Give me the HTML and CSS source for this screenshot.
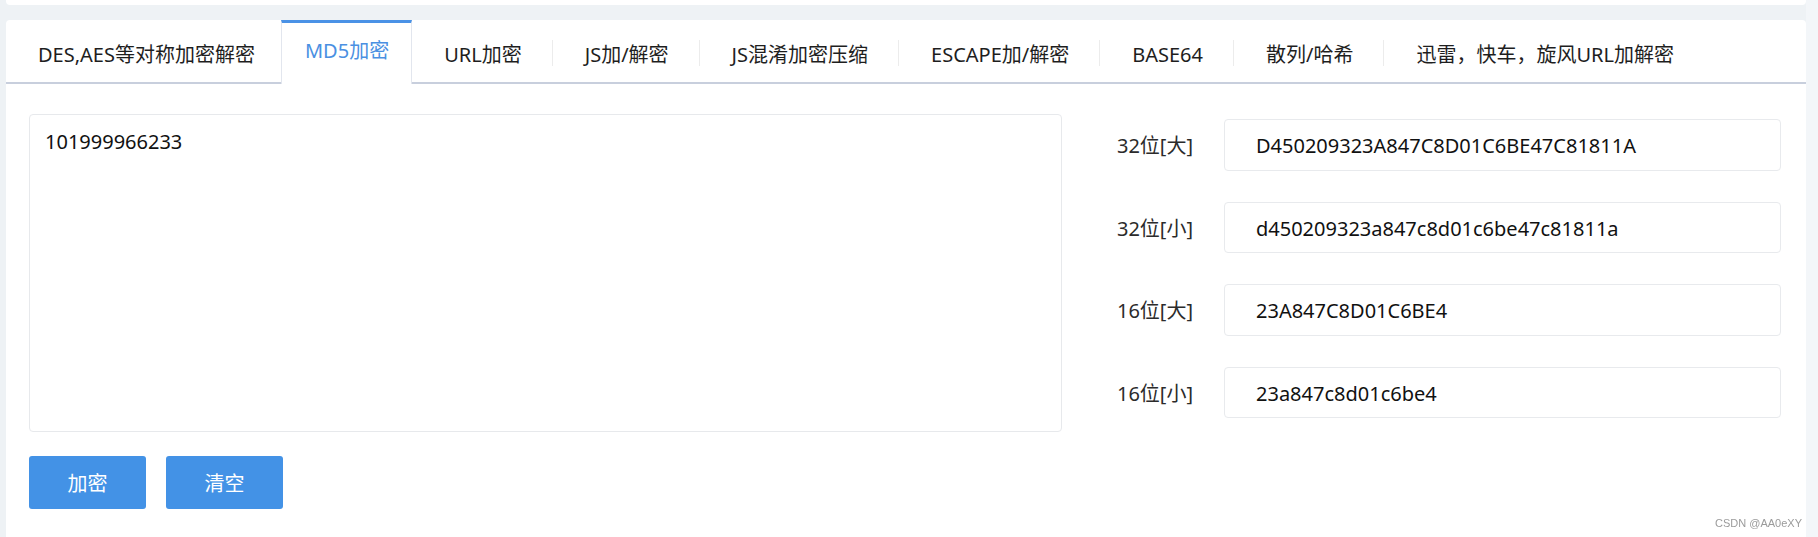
FILE: index.html
```html
<!DOCTYPE html>
<html lang="zh-CN">
<head>
<meta charset="utf-8">
<title>MD5加密</title>
<link rel="stylesheet" href="styles.css">
</head>
<body>
<div class="page">
  <div class="topbar"></div>
  <div class="card">
    <nav class="tabs">
      <div class="tab first">DES,AES等对称加密解密</div>
      <div class="tab active">MD5加密</div>
      <div class="tab sep">URL加密</div>
      <div class="tab sep">JS加/解密</div>
      <div class="tab sep">JS混淆加密压缩</div>
      <div class="tab sep">ESCAPE加/解密</div>
      <div class="tab sep">BASE64</div>
      <div class="tab sep">散列/哈希</div>
      <div class="tab">迅雷，快车，旋风URL加解密</div>
    </nav>
    <div class="content">
      <div class="left">
        <textarea class="source">101999966233</textarea>
        <div class="actions">
          <button class="btn">加密</button>
          <button class="btn">清空</button>
        </div>
      </div>
      <div class="right">
        <div class="row"><span class="label">32位[大]</span><div class="field">D450209323A847C8D01C6BE47C81811A</div></div>
        <div class="row"><span class="label">32位[小]</span><div class="field">d450209323a847c8d01c6be47c81811a</div></div>
        <div class="row"><span class="label">16位[大]</span><div class="field">23A847C8D01C6BE4</div></div>
        <div class="row"><span class="label">16位[小]</span><div class="field">23a847c8d01c6be4</div></div>
      </div>
    </div>
  </div>
</div>
<div class="watermark">CSDN @AA0eXY</div>
</body>
</html>
```

FILE: styles.css
```css
html, body {
  margin: 0;
  padding: 0;
  height: 100%;
  overflow: hidden;
}
body {
  background: linear-gradient(to right, #eef2f5 calc(100% - 12px), #f3f6f9 calc(100% - 12px));
  font-family: "Noto Sans", "Noto Sans CJK SC", sans-serif;
  color: #222;
}
.page {
  padding: 0 12px 0 6px;
}
.topbar {
  height: 5px;
  background: #fff;
  border-radius: 0 0 4px 4px;
}
.card {
  margin-top: 15px;
  background: #fff;
  border-radius: 4px 4px 0 0;
  height: calc(100vh - 20px);
}
.tabs {
  display: flex;
  height: 62px;
  border-bottom: 2px solid #c8cfdd;
}
.tab {
  position: relative;
  display: flex;
  align-items: center;
  box-sizing: border-box;
  height: 62px;
  padding: 8px 31px 0 32px;
  font-size: 20px;
  line-height: 24px;
  color: #1e1e1e;
  white-space: nowrap;
}
.tab.first {
  padding: 8px 26px 0 32px;
}
.tab.sep::after {
  content: "";
  position: absolute;
  right: 0;
  top: 20px;
  width: 1px;
  height: 26px;
  background: #ececec;
}
.tab.active {
  height: 64px;
  margin-bottom: -2px;
  padding: 0 22px 5px 23px;
  border-top: 3px solid #4a92e6;
  border-left: 1px solid #e2e6ee;
  border-right: 1px solid #e2e6ee;
  background: #fff;
  color: #4a90e2;
}
.content {
  display: flex;
  padding: 30px 0 0 23px;
}
.left {
  width: 1033px;
}
.source {
  display: block;
  box-sizing: border-box;
  width: 1033px;
  height: 318px;
  margin: 0;
  padding: 13px 15px;
  border: 1px solid #e7e9ec;
  border-radius: 4px;
  font-family: "Noto Sans", "Noto Sans CJK SC", sans-serif;
  font-size: 20px;
  line-height: 28px;
  color: #111;
  resize: none;
  outline: none;
  overflow: hidden;
}
.actions {
  display: flex;
  gap: 20px;
  margin-top: 24px;
}
.btn {
  width: 117px;
  height: 53px;
  border: none;
  border-radius: 3px;
  background: #4392e6;
  color: #fff;
  font-family: "Noto Sans", "Noto Sans CJK SC", sans-serif;
  font-size: 20px;
  padding: 0;
}
.right {
  display: flex;
  flex-direction: column;
  gap: 31px;
  padding-top: 5px;
}
.row {
  display: flex;
  align-items: center;
}
.label {
  flex: none;
  width: 162px;
  box-sizing: border-box;
  padding-right: 31px;
  text-align: right;
  font-size: 20px;
  color: #2b2b2b;
  white-space: nowrap;
}
.field {
  flex: none;
  display: flex;
  align-items: center;
  box-sizing: border-box;
  width: 557px;
  height: 51.5px;
  padding: 2px 0 0 31px;
  border: 1px solid #e8eaed;
  border-radius: 4px;
  font-size: 20px;
  color: #111;
}
.watermark {
  position: fixed;
  right: 16px;
  bottom: 8px;
  font-family: "Liberation Sans", Arial, sans-serif;
  font-size: 11px;
  color: #9b9b9b;
}
```
